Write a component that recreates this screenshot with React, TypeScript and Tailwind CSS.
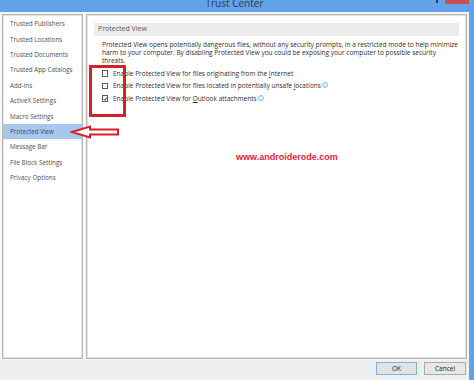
import React from 'react';

const navItems = [
  'Trusted Publishers',
  'Trusted Locations',
  'Trusted Documents',
  'Trusted App Catalogs',
  'Add-ins',
  'ActiveX Settings',
  'Macro Settings',
  'Protected View',
  'Message Bar',
  'File Block Settings',
  'Privacy Options',
];

function InfoIcon() {
  return (
    <svg width="6" height="6" viewBox="0 0 12 12" className="inline-block ml-[1px] -mt-[3px]">
      <circle cx="6" cy="6" r="5" fill="none" stroke="#3f8fe0" strokeWidth="1.2" />
      <rect x="5.4" y="5" width="1.2" height="4" fill="#3f8fe0" />
      <rect x="5.4" y="2.8" width="1.2" height="1.2" fill="#3f8fe0" />
    </svg>
  );
}

function Checkbox({ checked }: { checked?: boolean }) {
  return (
    <div className="w-[6.5px] h-[6.5px] border border-[#5c5c5c] bg-white flex items-center justify-center">
      {checked && (
        <svg width="6" height="6" viewBox="0 0 10 10">
          <path d="M1.5 5 L4 7.8 L8.8 1.5" fill="none" stroke="#111" strokeWidth="1.8" />
        </svg>
      )}
    </div>
  );
}

function OptionRow({ checked, children }: { checked?: boolean; children: React.ReactNode }) {
  return (
    <div className="h-[12.5px] flex items-center">
      <div className="ml-[14.5px] mr-[5px]">
        <Checkbox checked={checked} />
      </div>
      <span className="whitespace-nowrap">{children}</span>
    </div>
  );
}

export default function App() {
  return (
    <div className="relative w-[474px] h-[380px] overflow-hidden bg-[#61a2e9] flex flex-col font-['Open_Sans',sans-serif] text-[6.3px]">
      {/* title bar */}
      <div className="relative h-[12px] w-[469px] flex justify-center overflow-hidden">
        <span className="text-[10px] leading-none text-[#2d3b4c] -mt-[2px]">Trust Center</span>
        <div className="absolute top-0 left-[436px] w-[1.5px] h-[3px] bg-[#2d3b4c]" />
        <div className="absolute top-0 left-[445px] w-[25px] h-[4px] bg-[#c84f4f]" />
      </div>

      <div className="flex flex-1">
        <div className="w-[469px] flex flex-col bg-[#f7f7f7]">
          <div className="flex flex-1 pt-[2px] pb-[1px]">
            {/* left nav */}
            <div className="ml-[2px] w-[81px] bg-white border border-[#b5b5b5] shadow-[inset_0_0_0_1px_#e4e4e4] pt-[1.3px] text-[#505050]">
              {navItems.map((item) => (
                <div
                  key={item}
                  className={
                    item === 'Protected View'
                      ? 'h-[15.4px] flex items-center pl-[7px] bg-[#a6c7ee] text-[#3a4a5c]'
                      : 'h-[15.4px] flex items-center pl-[7px]'
                  }
                >
                  {item}
                </div>
              ))}
            </div>

            {/* main panel */}
            <div className="ml-[3px] w-[381px] bg-white border border-[#b5b5b5] shadow-[inset_0_0_0_1px_#e4e4e4] text-[#2e2e2e] text-[6.5px]">
              <div className="mt-[8px] mx-[7px] h-[13px] bg-[#ececec] flex items-center pl-[4px] text-[7px] text-[#5a5a5a]">
                Protected View
              </div>
              <p className="mt-[4.5px] pl-[15px] pr-[6px] leading-[8.3px]">
                Protected View opens potentially dangerous files, without any security prompts, in a restricted mode to help minimize harm to your computer. By disabling Protected View you could be exposing your computer to possible security threats.
              </p>
              <div className="mt-[2px]">
                <OptionRow>
                  Enable Protected View for files originating from the <span className="underline">I</span>nternet
                </OptionRow>
                <OptionRow>
                  Enable Protected View for files located in potentially unsafe <span className="underline">l</span>ocations
                  <InfoIcon />
                </OptionRow>
                <OptionRow checked>
                  Enable Protected View for <span className="underline">O</span>utlook attachments
                  <InfoIcon />
                </OptionRow>
              </div>
              <div className="mt-[46px] pl-[149px] text-[9px] leading-[12px] font-bold text-[#e51d3e] font-['Liberation_Sans',sans-serif]">
                www.androiderode.com
              </div>
            </div>
          </div>

          {/* bottom bar */}
          <div className="h-[20px] bg-[#efefef] flex justify-end items-start pt-[2px] pr-[3px] gap-[7px] text-[6.5px] text-[#222]">
            <button className="w-[41px] h-[13px] border border-[#7db2e8] bg-[#e3e3e3] flex items-center justify-center">OK</button>
            <button className="w-[42px] h-[13px] border border-[#ababab] bg-[#e6e6e6] flex items-center justify-center">Cancel</button>
          </div>
        </div>
      </div>

      {/* annotation: red box around checkboxes */}
      <div className="absolute left-[89px] top-[65px] w-[37px] h-[52px] border-[3px] border-[#d4202a]" />
      {/* annotation: arrow pointing at Protected View */}
      <svg className="absolute left-[70px] top-[125px]" width="50" height="15" viewBox="0 0 50 15">
        <path d="M2 7 L20 1.5 L20 4.5 L48 4.5 L48 9.5 L20 9.5 L20 12.5 Z" fill="#fff" stroke="#dc1f26" strokeWidth="2" strokeLinejoin="miter" />
      </svg>
    </div>
  );
}
